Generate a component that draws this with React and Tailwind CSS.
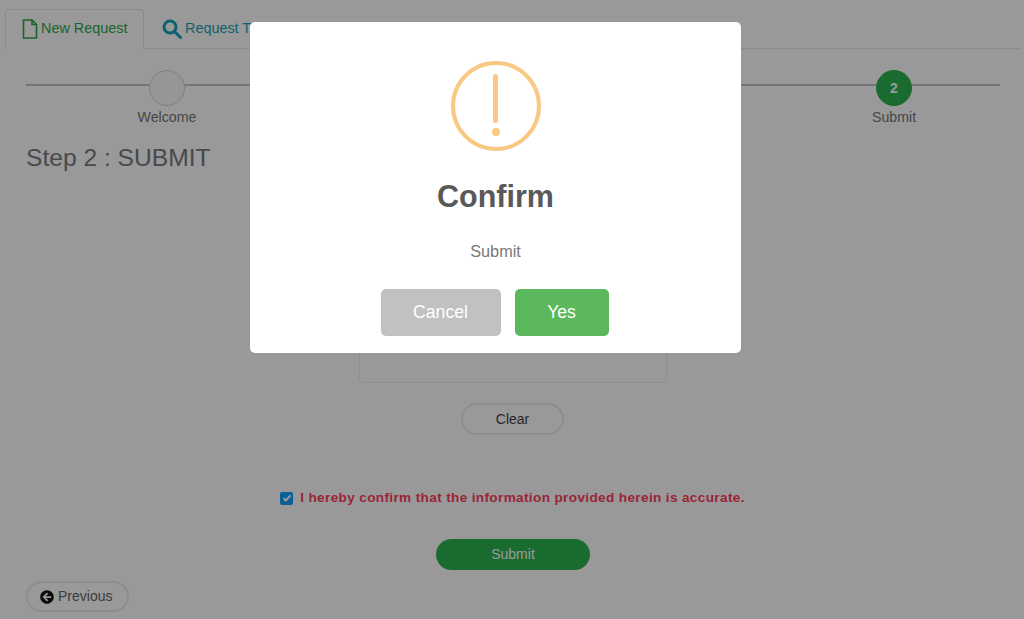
import React from 'react';
import { FaArrowCircleLeft } from 'react-icons/fa';

const Step = ({ label, active, number }) => (
  <div className="w-[60px] flex flex-col items-center relative">
    <div className={`w-[36px] h-[36px] rounded-full flex items-center justify-center text-[14px] font-bold border ${active ? 'bg-[#2bb24f] border-[#2bb24f] text-white' : 'bg-[#fafafa] border-[#d4d4d4]'}`}>
      {number}
    </div>
    <div className="mt-[1px] text-[14.2px] leading-[20px] text-[#757575] whitespace-nowrap">{label}</div>
  </div>
);

const App = () => {
  return (
    <div className="relative w-[1024px] h-[619px] overflow-hidden bg-white font-['Liberation_Sans',Arial,sans-serif]">
      {/* page behind the dialog */}
      <div className="pt-[9px]">
        <div className="flex mx-[5px] w-[1015px] h-[40px] border-b border-[#e6e6e6]">
          <div className="flex items-center w-[139px] h-[40px] pl-[16px] bg-white border border-b-white border-[#e6e6e6] rounded-t-[4px]">
            <svg width="16" height="20" viewBox="0 0 16 20" fill="none" stroke="#2aa84a" strokeWidth="1.6">
              <path d="M1.5 1h8.5l4.5 4.5v13.5h-13z" />
              <path d="M10 1v4.5h4.5" />
            </svg>
            <span className="ml-[3px] text-[14.4px] text-[#2aa84a]">New Request</span>
          </div>
          <div className="flex items-center h-[40px] pl-[18px]">
            <svg width="20" height="20" viewBox="0 0 20 20" fill="none" stroke="#17a2b8" strokeWidth="3">
              <circle cx="8" cy="8" r="6" />
              <path d="M12.5 12.5l6 6" strokeLinecap="round" />
            </svg>
            <span className="ml-[3px] text-[14.4px] text-[#17a2b8] whitespace-nowrap">Request Tracking</span>
          </div>
        </div>

        <div className="relative mt-[21px] mx-[26px] w-[974px] flex justify-between pl-[111px] pr-[76px]">
          <div className="absolute left-0 right-0 top-[14px] h-[2px] bg-[#c4c4c4]"></div>
          <Step label="Welcome" />
          <Step label="Submit" active number="2" />
        </div>

        <h2 className="mt-[17px] ml-[26px] text-[24.6px] leading-[28px] text-[#787b80]">Step 2 : SUBMIT</h2>

        <div className="flex flex-col items-center pl-[2px]">
          <div className="mt-[30px] w-[308px] h-[181px] bg-white border border-[#ededed] rounded-[4px]"></div>
          <button className="mt-[20px] -ml-[1px] w-[103px] h-[32px] rounded-full bg-white border-2 border-[#ebebeb] text-[14px] text-[#444]">Clear</button>
          <label className="mt-[55px] -ml-[1px] flex items-center">
            <span className="w-[13px] h-[13px] rounded-[2px] bg-[#169eff] flex items-center justify-center">
              <svg width="10" height="10" viewBox="0 0 10 10" fill="none" stroke="white" strokeWidth="2">
                <path d="M1.5 5.2l2.3 2.3 4.7-5" />
              </svg>
            </span>
            <span className="ml-[7px] text-[13.6px] leading-[16px] font-bold tracking-[0.35px] text-[#ff3d5c]">I hereby confirm that the information provided herein is accurate.</span>
          </label>
          <button className="mt-[33px] w-[154px] h-[31px] rounded-full bg-[#2bb24f] text-[14px] text-white">Submit</button>
        </div>

        <button className="mt-[11px] ml-[26px] flex items-center w-[103px] h-[31px] pl-[12px] rounded-full bg-white border-2 border-[#ebebeb] text-[14px] text-[#666]">
          <FaArrowCircleLeft size={14} color="#111" />
          <span className="ml-[4px]">Previous</span>
        </button>
      </div>

      {/* overlay and dialog */}
      <div className="absolute inset-0 bg-black/40 flex justify-center items-start pr-[33px]">
        <div className="mt-[22px] w-[491px] h-[331px] bg-white rounded-[5px] flex flex-col items-center">
          <div className="mt-[39px] w-[90px] h-[90px] rounded-full border-[4px] border-[#f9c883] flex flex-col items-center">
            <div className="mt-[9px] w-[5px] h-[49px] rounded-full bg-[#f9c883]"></div>
            <div className="mt-[5px] w-[8px] h-[8px] rounded-full bg-[#f9c883]"></div>
          </div>
          <h2 className="mt-[27px] text-[30.5px] leading-[36px] font-bold text-[#595959]">Confirm</h2>
          <div className="mt-[27px] text-[16.3px] leading-[20px] text-[#797979]">Submit</div>
          <div className="mt-[28px] -ml-[2px] flex gap-[14px]">
            <button className="w-[120px] h-[47px] rounded-[5px] bg-[#c1c1c1] text-[17.6px] text-white">Cancel</button>
            <button className="w-[94px] h-[47px] rounded-[5px] bg-[#5cb85c] text-[17.6px] text-white">Yes</button>
          </div>
        </div>
      </div>
    </div>
  );
};

export default App;
